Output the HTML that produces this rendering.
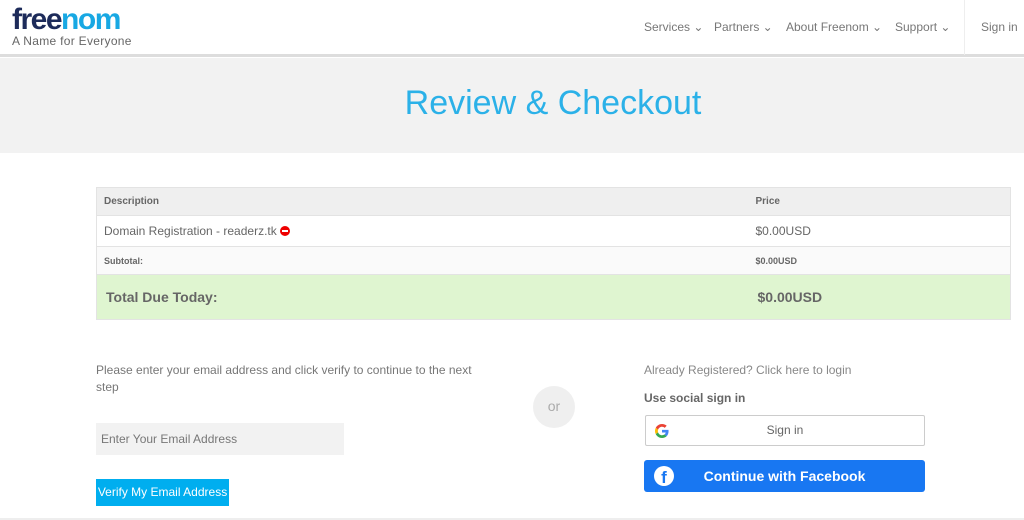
<!DOCTYPE html>
<html><head><meta charset="utf-8"><style>
*{margin:0;padding:0;box-sizing:border-box}
body{width:1024px;height:520px;overflow:hidden;background:#fff;font-family:"Liberation Sans",sans-serif;color:#666;position:relative}
.a{position:absolute}
.hdr{left:0;top:0;width:1024px;height:57px;background:#fff;border-bottom:3px solid #ddd}
.logo{left:12px;top:3px;font-size:30px;font-weight:bold;letter-spacing:-1.5px;line-height:34px}
.tag{left:12px;top:34px;font-size:12px;color:#666;letter-spacing:.3px}
.nav{top:20px;font-size:12px;color:#777}
.band{left:0;top:58px;width:1024px;height:95px;background:#f2f2f2}
.title{left:0;width:1106px;top:84px;text-align:center;font-size:34px;color:#2bb1e8;font-weight:300}
table{position:absolute;left:96px;top:187px;width:915px;border-collapse:collapse;font-size:12px;border:1px solid #e3e3e3}
td{border-top:1px solid #e3e3e3;border-bottom:1px solid #e3e3e3;padding:0 7px;color:#666}
</style></head><body>
<div class="a hdr"></div>
<div class="a logo"><span style="color:#1d2b5a">free</span><span style="color:#18a8e3">nom</span></div>
<div class="a tag">A Name for Everyone</div>
<div class="a nav" style="left:644px">Services ⌄</div>
<div class="a nav" style="left:714px">Partners ⌄</div>
<div class="a nav" style="left:786px">About Freenom ⌄</div>
<div class="a nav" style="left:895px">Support ⌄</div>
<div class="a" style="left:964px;top:0;width:1px;height:55px;background:#eee"></div>
<div class="a nav" style="left:981px">Sign in</div>
<div class="a band"></div>
<div class="a title">Review &amp; Checkout</div>
<table>
<tr style="height:28px;background:#efefef"><td style="width:652px;font-size:10px;font-weight:bold">Description</td><td style="font-size:10px;font-weight:bold">Price</td></tr>
<tr style="height:31px"><td>Domain Registration - readerz.tk <span style="display:inline-block;width:10px;height:10px;border-radius:50%;background:#e00;vertical-align:-1px;position:relative"><span style="position:absolute;left:2px;top:4px;width:6px;height:2px;background:#fff"></span></span></td><td>$0.00USD</td></tr>
<tr style="height:28px;background:#fafafa"><td style="font-size:9px;font-weight:bold">Subtotal:</td><td style="font-size:9px;font-weight:bold">$0.00USD</td></tr>
<tr style="height:45px;background:#dff5d0"><td style="font-size:14px;font-weight:bold;padding-left:9px">Total Due Today:</td><td style="font-size:14px;font-weight:bold;padding-left:9px">$0.00USD</td></tr>
</table>
<div class="a" style="left:96px;top:362px;width:380px;font-size:12px;line-height:17px;color:#777">Please enter your email address and click verify to continue to the next step</div>
<div class="a" style="left:533px;top:386px;width:42px;height:42px;border-radius:50%;background:#efefef;color:#aaa;font-size:14px;text-align:center;line-height:40px">or</div>
<div class="a" style="left:96px;top:423px;width:248px;height:32px;background:#f2f2f2;font-size:12px;color:#777;padding:9px 5px">Enter Your Email Address</div>
<div class="a" style="left:96px;top:479px;width:133px;height:27px;background:#00aeef;color:#fff;font-size:12px;text-align:center;line-height:27px">Verify My Email Address</div>
<div class="a" style="left:0;top:518px;width:1024px;height:2px;background:#eee"></div>
<div class="a" style="left:644px;top:363px;font-size:12px;color:#888">Already Registered? Click here to login</div>
<div class="a" style="left:644px;top:391px;font-size:12px;font-weight:bold;color:#666">Use social sign in</div>
<div class="a" style="left:645px;top:415px;width:280px;height:31px;border:1px solid #ccc;border-radius:2px;font-size:12px;color:#666;text-align:center;line-height:29px">Sign in
<svg style="position:absolute;left:9px;top:8px" width="14" height="14" viewBox="0 0 48 48"><path fill="#EA4335" d="M24 9.5c3.5 0 6.7 1.2 9.2 3.6l6.9-6.9C35.9 2.4 30.5 0 24 0 14.6 0 6.6 5.4 2.6 13.3l8 6.2C12.5 13.7 17.800 9.5 24 9.5z"/><path fill="#4285F4" d="M46.5 24.5c0-1.6-.1-3.1-.4-4.5H24v9h12.7c-.6 2.9-2.2 5.4-4.7 7.1l7.7 6c4.5-4.2 6.8-10.300 6.8-17.6z"/><path fill="#FBBC05" d="M10.5 28.6c-.5-1.4-.8-3-.8-4.6s.3-3.2.8-4.6l-8-6.2C.9 16.5 0 20.1 0 24s.9 7.5 2.6 10.8l7.9-6.2z"/><path fill="#34A853" d="M24 48c6.5 0 11.9-2.1 15.9-5.8l-7.7-6c-2.2 1.5-5 2.3-8.2 2.3-6.2 0-11.5-4.2-13.4-9.9l-8 6.2C6.6 42.6 14.6 48 24 48z"/></svg></div>
<div class="a" style="left:644px;top:460px;width:281px;height:32px;background:#1877f2;border-radius:3px;color:#fff;font-size:14px;font-weight:bold;text-align:center;line-height:32px">Continue with Facebook
<div style="position:absolute;left:10px;top:6px;width:20px;height:20px;border-radius:50%;background:#fff;color:#1877f2;font-size:17px;line-height:24px;text-align:center;font-weight:bold;overflow:hidden">f</div></div>
</body></html>
